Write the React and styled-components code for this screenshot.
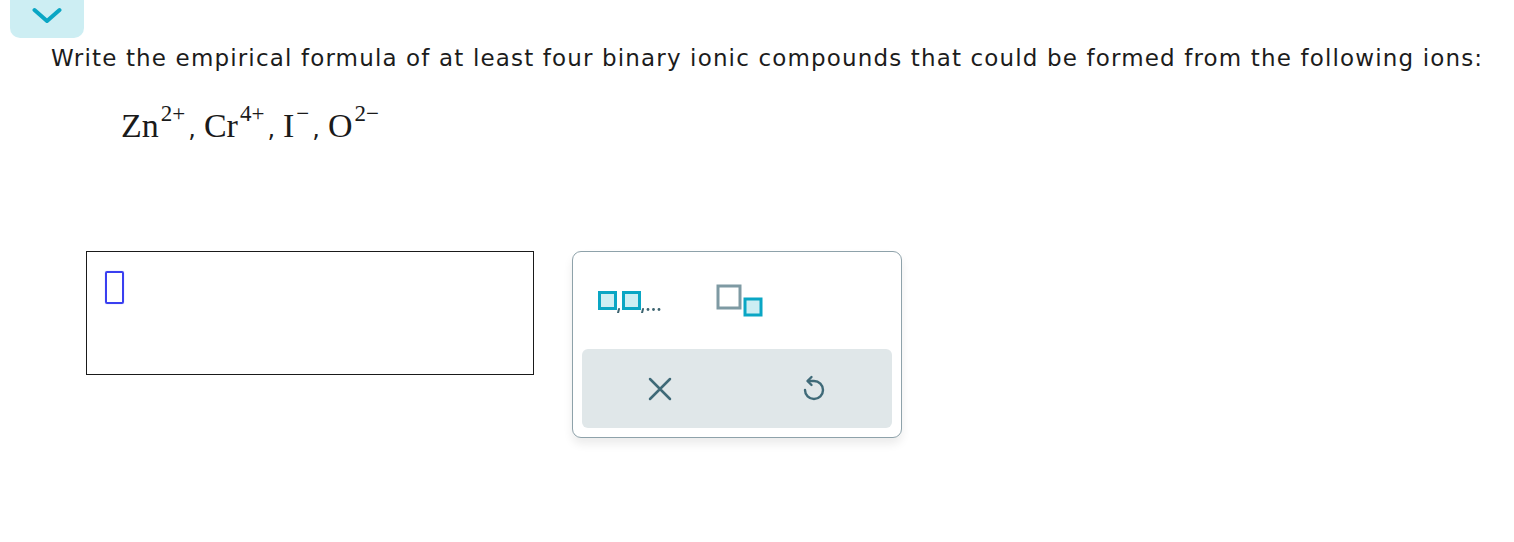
import React from "react";
import styled, { createGlobalStyle } from "styled-components";

const Global = createGlobalStyle`
  html, body { margin: 0; padding: 0; background: #fff; }
  body { font-family: "DejaVu Sans", Verdana, sans-serif; color: #1a1a1a; }
`;

const Page = styled.div`
  width: 1514px;
  height: 542px;
  position: relative;
  overflow: hidden;
`;

const CollapseButton = styled.button`
  display: flex;
  align-items: flex-start;
  justify-content: center;
  margin-left: 10px;
  width: 74px;
  height: 38px;
  border: none;
  border-radius: 0 0 10px 10px;
  background: #cdeef3;
  padding: 6px 0 0 0;
  box-sizing: border-box;
  cursor: pointer;
`;

const Question = styled.p`
  margin: 7px 0 0 51px;
  font-size: 23px;
  letter-spacing: 1.15px;
  line-height: 26px;
  color: #1c1c1c;
  white-space: nowrap;
`;

const Formula = styled.div`
  margin: 35px 0 0 121px;
  height: 40px;
  font-family: "Liberation Serif", "Times New Roman", serif;
  font-size: 34px;
  line-height: 40px;
  color: #1a1a1a;
  display: flex;
  align-items: baseline;
`;

const Sup = styled.span`
  font-size: 23px;
  position: relative;
  top: -16px;
  line-height: 0;
  margin-left: 2px;
`;

const Sep = styled.span`
  font-family: "DejaVu Sans", sans-serif;
  font-size: 24px;
  margin: 0 8px 0 3px;
`;

const AnswerRow = styled.div`
  display: flex;
  align-items: flex-start;
  gap: 38px;
  margin: 105px 0 0 86px;
`;

const AnswerBox = styled.div`
  width: 448px;
  height: 124px;
  border: 1px solid #1a1a1a;
  padding: 19px 0 0 18px;
  box-sizing: border-box;
`;

const Caret = styled.div`
  width: 15px;
  height: 29px;
  border: 2px solid #3a3ff0;
  border-radius: 2px;
  box-shadow: 0 0 1px rgba(58, 63, 240, 0.5);
`;

const Palette = styled.div`
  width: 330px;
  height: 187px;
  box-sizing: border-box;
  border: 1px solid #8ea2aa;
  border-radius: 9px;
  background: #fff;
  box-shadow: 0 6px 10px rgba(0, 0, 0, 0.08);
  padding: 0 9px 9px 9px;
  display: flex;
  flex-direction: column;
`;

const ToolRow = styled.div`
  display: flex;
  align-items: center;
  height: 97px;
  padding-left: 16px;
  gap: 50px;
`;

const ToolButton = styled.button`
  border: none;
  background: transparent;
  padding: 0;
  display: flex;
  align-items: center;
  cursor: pointer;
`;

const ActionBar = styled.div`
  flex: 1;
  background: #e0e7e9;
  border-radius: 6px;
  display: grid;
  grid-template-columns: 1fr 1fr;
  align-items: center;
  justify-items: center;
`;

const ActionButton = styled.button`
  border: none;
  background: transparent;
  padding: 0;
  display: flex;
  align-items: center;
  justify-content: center;
  cursor: pointer;
  margin-left: ${(p) => p.$shift || 0}px;
`;

const Chevron = () => (
  <svg width="30" height="20" viewBox="0 0 30 20">
    <path d="M2.5 4 L15 15 L27.5 4" fill="none" stroke="#0aa6c4" strokeWidth="4" strokeLinecap="round" strokeLinejoin="round" />
  </svg>
);

const ListIcon = () => (
  <svg width="68" height="24" viewBox="0 0 68 24">
    <rect x="1.5" y="3.5" width="16" height="16" fill="#cdeef3" stroke="#0aa6c4" strokeWidth="3" />
    <path d="M21 20 l-1 4" stroke="#3d6470" strokeWidth="2" strokeLinecap="round" />
    <rect x="25.5" y="3.5" width="16" height="16" fill="#cdeef3" stroke="#0aa6c4" strokeWidth="3" />
    <path d="M45 20 l-1 4" stroke="#3d6470" strokeWidth="2" strokeLinecap="round" />
    <circle cx="50" cy="20.5" r="1.4" fill="#3d6470" />
    <circle cx="55.5" cy="20.5" r="1.4" fill="#3d6470" />
    <circle cx="61" cy="20.5" r="1.4" fill="#3d6470" />
  </svg>
);

const SubscriptIcon = () => (
  <svg width="50" height="34" viewBox="0 0 50 34">
    <rect x="2" y="2" width="22" height="22" fill="#fff" stroke="#7e9aa3" strokeWidth="3" />
    <rect x="29" y="15" width="16" height="16" fill="#cdeef3" stroke="#0aa6c4" strokeWidth="3" />
  </svg>
);

const CloseIcon = () => (
  <svg width="24" height="24" viewBox="0 0 24 24">
    <path d="M2 2 L22 22 M22 2 L2 22" stroke="#3f6a78" strokeWidth="2.5" strokeLinecap="round" />
  </svg>
);

const UndoIcon = () => (
  <svg width="26" height="28" viewBox="0 0 26 28">
    <path d="M7 6 H13 A9 9 0 1 1 4 15" fill="none" stroke="#3f6a78" strokeWidth="2.4" strokeLinecap="round" />
    <path d="M10.5 2 L6.5 6 L10.5 10" fill="none" stroke="#3f6a78" strokeWidth="2.4" strokeLinecap="round" strokeLinejoin="round" />
  </svg>
);

export default function App() {
  return (
    <Page>
      <Global />
      <CollapseButton aria-label="collapse">
        <Chevron />
      </CollapseButton>
      <Question>
        Write the empirical formula of at least four binary ionic compounds that could be formed from the following ions:
      </Question>
      <Formula>
        <span>Zn</span>
        <Sup>2+</Sup>
        <Sep>,</Sep>
        <span>Cr</span>
        <Sup>4+</Sup>
        <Sep>,</Sep>
        <span>I</span>
        <Sup>&minus;</Sup>
        <Sep>,</Sep>
        <span>O</span>
        <Sup>2&minus;</Sup>
      </Formula>
      <AnswerRow>
        <AnswerBox>
          <Caret />
        </AnswerBox>
        <Palette>
          <ToolRow>
            <ToolButton aria-label="list">
              <ListIcon />
            </ToolButton>
            <ToolButton aria-label="subscript">
              <SubscriptIcon />
            </ToolButton>
          </ToolRow>
          <ActionBar>
            <ActionButton aria-label="clear">
              <CloseIcon />
            </ActionButton>
            <ActionButton aria-label="undo" $shift={-2}>
              <UndoIcon />
            </ActionButton>
          </ActionBar>
        </Palette>
      </AnswerRow>
    </Page>
  );
}
